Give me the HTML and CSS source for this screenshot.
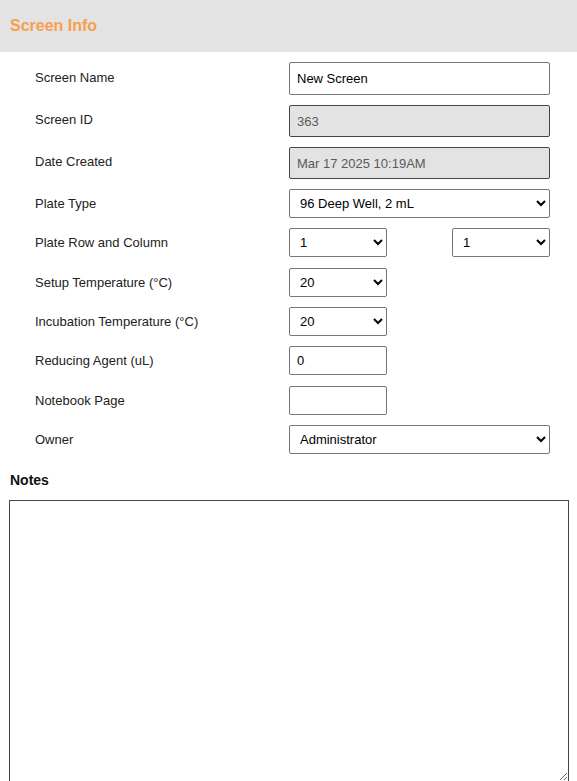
FILE: index.html
```html
<!DOCTYPE html>
<html lang="en">
<head>
    <meta charset="UTF-8">
    <meta name="viewport" content="width=device-width, initial-scale=1.0">
    <title>Screen Info</title>
    <link rel="stylesheet" href="styles.css">
</head>
<body>
    <div class="header">
        <h1>Screen Info</h1>
    </div>

    <div class="form">
        <div class="row row-tall first">
            <label for="screen-name">Screen Name</label>
            <input id="screen-name" class="text-input wide" type="text" value="New Screen">
        </div>
        <div class="row row-tall">
            <label for="screen-id">Screen ID</label>
            <input id="screen-id" class="text-input wide" type="text" value="363" disabled>
        </div>
        <div class="row row-tall">
            <label for="date-created">Date Created</label>
            <input id="date-created" class="text-input wide" type="text" value="Mar 17 2025 10:19AM" disabled>
        </div>
        <div class="row">
            <label for="plate-type">Plate Type</label>
            <select id="plate-type" class="select wide">
                <option>96 Deep Well, 2 mL</option>
            </select>
        </div>
        <div class="row">
            <label for="plate-row">Plate Row and Column</label>
            <div class="pair">
                <select id="plate-row" class="select small">
                    <option>1</option>
                </select>
                <select id="plate-col" class="select small">
                    <option>1</option>
                </select>
            </div>
        </div>
        <div class="row">
            <label for="setup-temp">Setup Temperature (°C)</label>
            <select id="setup-temp" class="select small">
                <option>20</option>
            </select>
        </div>
        <div class="row">
            <label for="incubation-temp">Incubation Temperature (°C)</label>
            <select id="incubation-temp" class="select small">
                <option>20</option>
            </select>
        </div>
        <div class="row">
            <label for="reducing-agent">Reducing Agent (uL)</label>
            <input id="reducing-agent" class="text-input small" type="text" value="0">
        </div>
        <div class="row">
            <label for="notebook-page">Notebook Page</label>
            <input id="notebook-page" class="text-input small" type="text" value="">
        </div>
        <div class="row">
            <label for="owner">Owner</label>
            <select id="owner" class="select wide">
                <option>Administrator</option>
            </select>
        </div>
    </div>

    <div class="notes">
        <h2>Notes</h2>
        <textarea id="notes"></textarea>
    </div>
</body>
</html>
```

FILE: styles.css
```css
body {
    font-family: "Liberation Sans", Arial, sans-serif;
    font-size: 13px;
    color: #222222;
    margin: 0;
    padding: 0;
    background-color: #ffffff;
}

.header {
    background-color: #e3e3e3;
    height: 52px;
    display: flex;
    align-items: center;
    padding-left: 10px;
}

h1 {
    margin: 0;
    font-size: 16px;
    font-weight: bold;
    color: #f7a04c; /* orange title */
}

.form {
    padding-top: 5px;
}

.row {
    display: flex;
    align-items: center;
    padding: 5.15px 0;
}

.row label {
    width: 254px;
    padding-left: 35px;
    flex-shrink: 0;
}

.row-tall label {
    margin-top: -3px;
}

.text-input,
.select {
    box-sizing: border-box;
    font-family: "Liberation Sans", Arial, sans-serif;
    font-size: 13px;
    color: #000000;
    background-color: #ffffff;
    border: 1px solid #767676;
    border-radius: 2px;
    margin: 0;
}

.text-input {
    padding: 0 7px;
    height: 29px;
}

.row-tall {
    padding: 5px 0;
}

.row-tall .text-input {
    height: 32px;
}

.first .text-input {
    height: 33px;
}

.text-input:disabled {
    background-color: #e3e3e3;
    color: #5a5a5a;
    border-color: #454545;
}

.select {
    height: 29px;
    padding: 0 6px;
}

.wide {
    width: 261px;
}

.small {
    width: 98px;
}

.pair {
    width: 261px;
    display: flex;
    justify-content: space-between;
}

.notes {
    padding: 13px 9px 0 9px;
}

h2 {
    margin: 0 0 12px 1px;
    font-size: 14px;
    font-weight: bold;
    color: #111111;
}

textarea {
    box-sizing: border-box;
    display: block;
    width: 560px;
    height: 282px;
    border: 1px solid #454545;
    border-radius: 0;
    margin: 0;
}
```
